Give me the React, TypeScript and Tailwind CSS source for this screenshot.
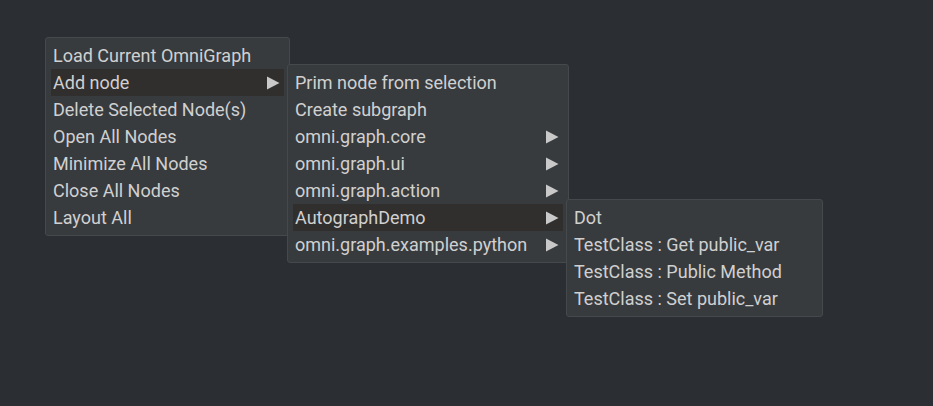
const mainItems = [
  { label: "Load Current OmniGraph" },
  { label: "Add node", sub: true, active: true },
  { label: "Delete Selected Node(s)" },
  { label: "Open All Nodes" },
  { label: "Minimize All Nodes" },
  { label: "Close All Nodes" },
  { label: "Layout All" },
]

const nodeItems = [
  { label: "Prim node from selection" },
  { label: "Create subgraph" },
  { label: "omni.graph.core", sub: true },
  { label: "omni.graph.ui", sub: true },
  { label: "omni.graph.action", sub: true },
  { label: "AutographDemo", sub: true, active: true },
  { label: "omni.graph.examples.python", sub: true },
]

const demoItems = [
  { label: "Dot" },
  { label: "TestClass : Get public_var" },
  { label: "TestClass : Public Method" },
  { label: "TestClass : Set public_var" },
]

type Item = { label: string; sub?: boolean; active?: boolean }

function Arrow() {
  return (
    <svg width="14" height="14" viewBox="0 0 14 14" className="shrink-0">
      <path d="M1 0.5 L13.5 7 L1 13.5 Z" fill="#c9c9c9" />
    </svg>
  )
}

function Menu({ items, className }: { items: Item[]; className: string }) {
  return (
    <div className={`absolute flex flex-col py-[4px] px-[5px] bg-[#383b3e] border border-[#46494c] rounded-[3px] ${className}`}>
      {items.map((it) => (
        <div
          key={it.label}
          className={`flex items-center justify-between h-[27px] pl-[2px] pr-[4px] ${it.active ? "bg-[#302f2e]" : ""}`}
        >
          <span className="text-[18px] leading-none text-[#d0d0d0] whitespace-nowrap">{it.label}</span>
          {it.sub && <Arrow />}
        </div>
      ))}
    </div>
  )
}

export default function App() {
  return (
    <div
      className="relative w-[933px] h-[406px] bg-[#2b2f33] overflow-hidden"
      style={{ fontFamily: "Roboto, 'Noto Sans', sans-serif" }}
    >
      <Menu items={mainItems} className="left-[45px] top-[37px] w-[245px]" />
      <Menu items={nodeItems} className="left-[287px] top-[64px] w-[282px]" />
      <Menu items={demoItems} className="left-[566px] top-[199px] w-[257px]" />
    </div>
  )
}
